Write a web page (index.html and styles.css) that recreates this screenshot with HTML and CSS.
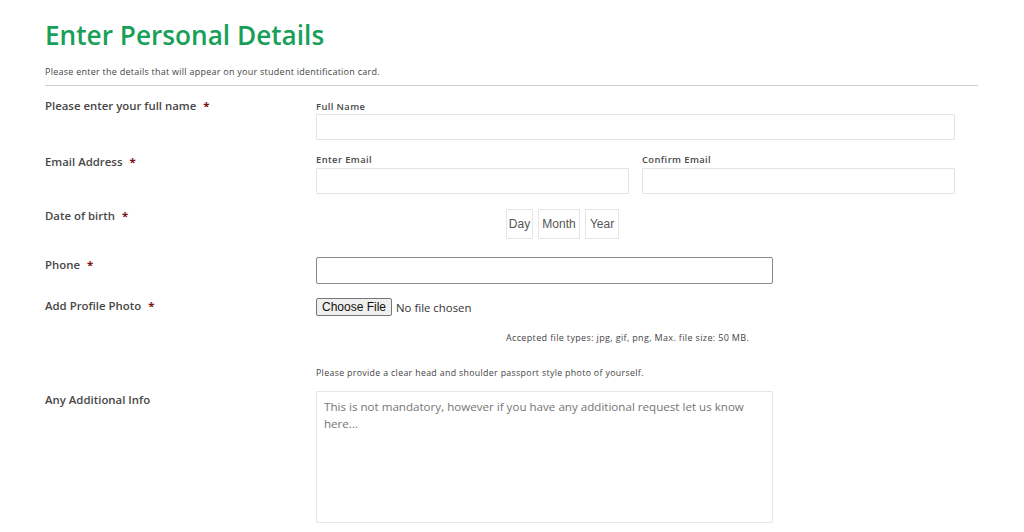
FILE: index.html
```html
<!DOCTYPE html>
<html>
<head>
<meta charset="utf-8">
<link rel="stylesheet" href="styles.css">
</head>
<body>
<div class="page">
  <h1 class="title">Enter Personal Details</h1>
  <p class="intro">Please enter the details that will appear on your student identification card.</p>
  <hr class="rule">
  <form class="form">
    <div class="row row-name">
      <div class="label">Please enter your full name <span class="req">*</span></div>
      <div class="field">
        <div class="sub">
          <div class="sublabel">Full Name</div>
          <input class="text wide" type="text">
        </div>
      </div>
    </div>
    <div class="row row-email">
      <div class="label">Email Address <span class="req">*</span></div>
      <div class="field pair">
        <div class="sub">
          <div class="sublabel">Enter Email</div>
          <input class="text" type="text">
        </div>
        <div class="sub">
          <div class="sublabel">Confirm Email</div>
          <input class="text" type="text">
        </div>
      </div>
    </div>
    <div class="row row-dob">
      <div class="label">Date of birth <span class="req">*</span></div>
      <div class="field dob">
        <div class="sel sel-day">Day</div>
        <div class="sel sel-month">Month</div>
        <div class="sel sel-year">Year</div>
      </div>
    </div>
    <div class="row row-phone">
      <div class="label">Phone <span class="req">*</span></div>
      <div class="field">
        <input class="phone" type="text">
      </div>
    </div>
    <div class="row row-photo">
      <div class="label">Add Profile Photo <span class="req">*</span></div>
      <div class="field photo">
        <div class="file"><span class="filebtn">Choose File</span><span class="filetxt">No file chosen</span></div>
        <div class="accepted">Accepted file types: jpg, gif, png, Max. file size: 50 MB.</div>
        <div class="hint">Please provide a clear head and shoulder passport style photo of yourself.</div>
      </div>
    </div>
    <div class="row row-info">
      <div class="label">Any Additional Info</div>
      <div class="field">
        <textarea class="area" placeholder="This is not mandatory, however if you have any additional request let us know here..."></textarea>
      </div>
    </div>
  </form>
</div>
</body>
</html>
```

FILE: styles.css
```css
* { box-sizing: border-box; }
html, body { margin: 0; padding: 0; background: #fff; }
body { font-family: "Open Sans", "Noto Sans", sans-serif; color: #555; }
.page { padding: 18px 46px 0 45px; width: 1024px; }
.title {
  margin: 0;
  font-family: "Open Sans", sans-serif;
  font-weight: 600;
  font-size: 26.2px;
  line-height: 34px;
  color: #18a058;
}
.intro {
  margin: 14px 0 0;
  font-size: 9px;
  letter-spacing: 0.25px;
  line-height: 12px;
  color: #444;
}
.rule {
  margin: 7px 0 0;
  border: 0;
  border-top: 1px solid #cfcfcf;
  width: 933px;
}
.form { display: flex; flex-direction: column; }
.row { display: flex; }
.label {
  width: 271px;
  flex: none;
  font-size: 11.4px;
  font-weight: 600;
  line-height: 14px;
  color: #474747;
}
.req { color: #7a1414; margin-left: 4px; font-weight: 700; }
.field { flex: none; width: 639px; }
.sublabel {
  font-size: 9.4px;
  font-weight: 600;
  letter-spacing: 0.4px;
  line-height: 12px;
  color: #4a4a4a;
  margin-bottom: 2px;
}
.text {
  display: block;
  height: 26px;
  border: 1px solid #e4e4e4;
  border-radius: 1px;
  background: #fff;
  width: 313px;
  padding: 0;
  margin: 0;
}
.text.wide { width: 639px; }
.pair { display: flex; gap: 13px; }
.row-name { margin-top: 14px; }
.row-name .label { margin-top: -1px; }
.row-name .sub { padding-top: 1px; }
.row-name .sublabel { margin-bottom: 1px; }
.row-email { margin-top: 14px; }
.row-email .label { padding-top: 1px; }
.row-dob { margin-top: 15px; }
.dob { display: flex; gap: 5px; padding-left: 190px; }
.sel {
  height: 30px;
  border: 1px solid #e6e6e6;
  font-family: "Liberation Sans", Arial, sans-serif;
  font-size: 12px;
  color: #555;
  display: flex;
  align-items: center;
  justify-content: center;
  line-height: 30px;
}
.sel-day { width: 27px; }
.sel-month { width: 42px; }
.sel-year { width: 34px; }
.row-phone { margin-top: 18px; }
.row-phone .label { padding-top: 1px; }
.phone {
  display: block;
  width: 457px;
  height: 27px;
  border: 1px solid #8a8a8a;
  border-radius: 2px;
  margin: 0;
  padding: 0;
  background: #fff;
}
.row-photo { margin-top: 14px; }
.row-photo .label { padding-top: 1px; }
.file { display: flex; align-items: center; height: 18px; }
.filebtn {
  font-family: "Liberation Sans", Arial, sans-serif;
  font-size: 12px;
  color: #111;
  background: #efefef;
  border: 1px solid #767676;
  border-radius: 2px;
  height: 18px;
  line-height: 16px;
  padding: 0 5px;
}
.filetxt {
  font-family: "Open Sans", sans-serif;
  font-size: 11.4px;
  color: #333;
  margin-left: 4px;
}
.accepted {
  margin: 16px 0 0 190px;
  font-size: 9px;
  letter-spacing: 0.35px;
  line-height: 12px;
  color: #444;
}
.hint {
  margin-top: 23px;
  font-size: 8.8px;
  letter-spacing: 0.33px;
  line-height: 12px;
  color: #444;
}
.row-info { margin-top: 12px; }
.row-info .label { padding-top: 2px; }
.area {
  display: block;
  width: 457px;
  height: 132px;
  border: 1px solid #e6e6e6;
  border-radius: 1px;
  padding: 6px 7px;
  margin: 0;
  resize: none;
  font-family: "Open Sans", sans-serif;
  font-size: 11.6px;
  line-height: 17px;
  color: #555;
}
.area::placeholder { color: #757575; opacity: 1; }
```
